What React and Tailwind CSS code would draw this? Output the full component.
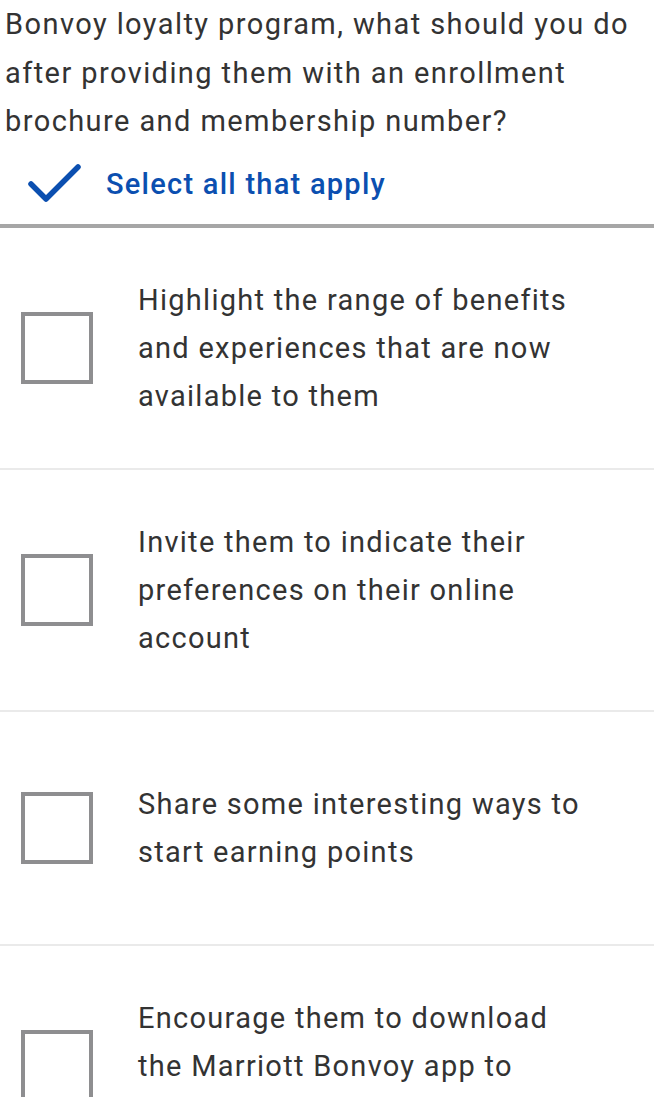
const options = [
  'Highlight the range of benefits and experiences that are now available to them',
  'Invite them to indicate their preferences on their online account',
  'Share some interesting ways to start earning points',
  'Encourage them to download the Marriott Bonvoy app to explore more',
]

function Checkbox() {
  return <div className="w-[72px] h-[72px] shrink-0 border-4 border-[#8e8e90] bg-white" />
}

export default function App() {
  return (
    <div className="w-[654px] h-[1097px] overflow-hidden bg-white font-['Roboto',sans-serif] text-[#333333]">
      <p className="pl-[5px] pr-1 text-[29px] leading-[48.5px] tracking-[1.42px]">
        Bonvoy loyalty program, what should you do after providing them with an enrollment brochure and membership number?
      </p>

      <div className="flex items-center h-[78px] pl-[28px]">
        <svg width="54" height="42" viewBox="0 0 54 42" className="shrink-0">
          <path d="M3 20 L18 35 L50 3" fill="none" stroke="#0b4fb0" strokeWidth="5.5" strokeLinecap="round" strokeLinejoin="round" />
        </svg>
        <span className="ml-[24px] text-[29px] font-medium tracking-[1.25px] text-[#0b4fb0]">Select all that apply</span>
      </div>

      <div className="h-[4px] bg-[#a6a6a6]" />

      {options.map((o, i) => (
        <div key={i} className="flex items-center min-h-[234px] py-[48px] pl-[21px] pr-[60px] border-b-2 border-[#eaeaea]">
          <Checkbox />
          <div className="ml-[45px] text-[29px] leading-[48px] tracking-[1.28px]">{o}</div>
        </div>
      ))}
    </div>
  )
}
